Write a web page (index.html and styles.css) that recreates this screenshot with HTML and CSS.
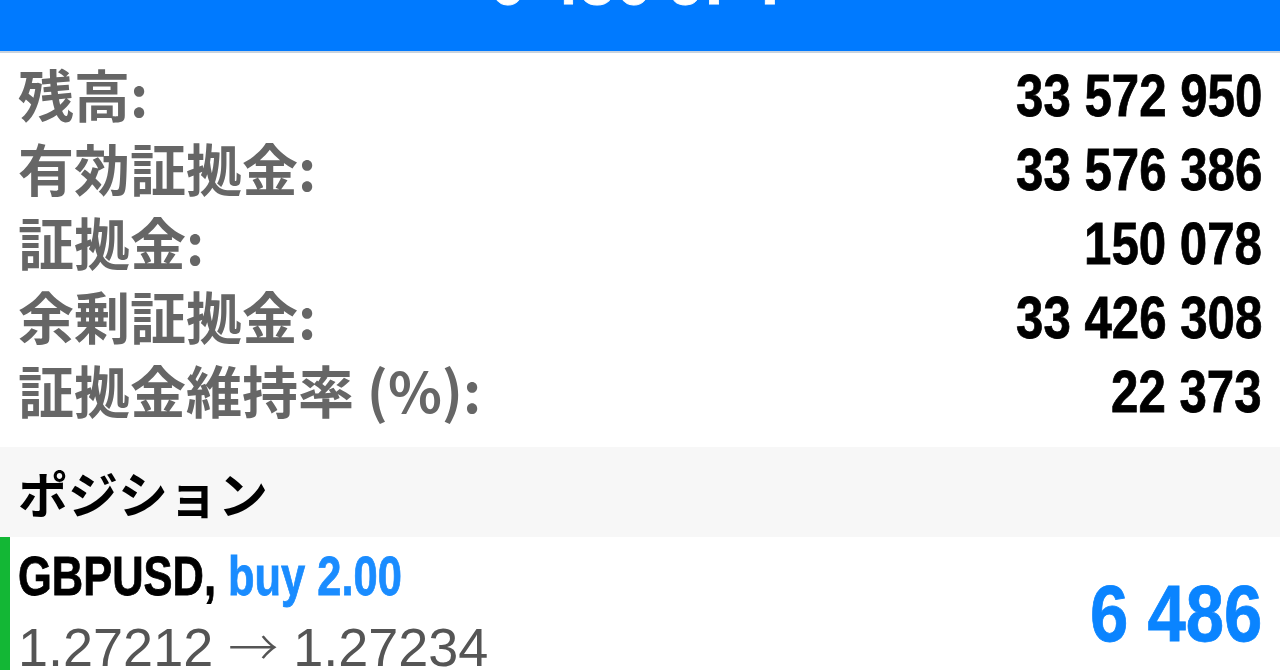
FILE: index.html
```html
<!DOCTYPE html>
<html lang="ja">
<head>
<meta charset="utf-8">
<link rel="stylesheet" href="styles.css">
</head>
<body>
<header class="topbar">
  <div class="topbar-value cond">6 486 JPY</div>
</header>
<section class="summary">
  <div class="row"><span class="label">残高:</span><span class="value cond">33 572 950</span></div>
  <div class="row"><span class="label">有効証拠金:</span><span class="value cond">33 576 386</span></div>
  <div class="row"><span class="label">証拠金:</span><span class="value cond">150 078</span></div>
  <div class="row"><span class="label">余剰証拠金:</span><span class="value cond">33 426 308</span></div>
  <div class="row"><span class="label">証拠金維持率 (%):</span><span class="value cond">22 373</span></div>
</section>
<div class="section-title">ポジション</div>
<div class="position">
  <div class="position-info">
    <div class="symbol cond">GBPUSD, <span class="side">buy 2.00</span></div>
    <div class="prices">1.27212 <span class="arrow">→</span> 1.27234</div>
  </div>
  <div class="profit cond">6 486</div>
</div>
</body>
</html>
```
FILE: styles.css
```css
html, body {
  margin: 0;
  padding: 0;
  background: #ffffff;
}
body {
  width: 1280px;
  height: 670px;
  overflow: hidden;
  font-family: "Liberation Sans", Arial, sans-serif;
}
.cond {
  display: inline-block;
  font-family: "Liberation Sans", Arial, sans-serif;
  font-weight: bold;
  white-space: nowrap;
  -webkit-text-stroke: 0.8px currentColor;
}
.topbar {
  height: 51px;
  background: #007aff;
  border-bottom: 2px solid #c9d3de;
  overflow: hidden;
  display: flex;
  justify-content: center;
  align-items: flex-start;
}
.topbar-value {
  color: #ffffff;
  font-size: 78px;
  line-height: 80px;
  margin-top: -63px;
  transform: scaleX(0.83);
  transform-origin: center;
}
.summary {
  padding: 3px 18px 21px 18px;
  display: flex;
  flex-direction: column;
}
.row {
  height: 74px;
  display: flex;
  justify-content: space-between;
  align-items: center;
}
.label {
  font-family: "Noto Sans CJK JP", "Liberation Sans", sans-serif;
  font-size: 56px;
  font-weight: bold;
  color: #666666;
  line-height: 74px;
}
.value {
  font-size: 60px;
  color: #000000;
  line-height: 74px;
  transform: scaleX(0.82);
  transform-origin: right center;
  position: relative;
  top: 3px;
}
.section-title {
  height: 90px;
  background: #f7f7f7;
  padding: 0 18px;
  display: flex;
  align-items: center;
  font-family: "Noto Sans CJK JP", sans-serif;
  font-size: 50px;
  font-weight: bold;
  color: #000000;
  line-height: 1;
}
.position {
  border-left: 10px solid #13b735;
  padding: 0 18px 0 8px;
  display: flex;
  justify-content: space-between;
  align-items: flex-start;
  height: 150px;
}
.position-info {
  display: flex;
  flex-direction: column;
  padding-top: 4px;
}
.symbol {
  font-size: 55px;
  color: #000000;
  line-height: 70px;
  transform: scaleX(0.79);
  transform-origin: left center;
}
.side {
  color: #1a8cff;
}
.prices {
  font-size: 54px;
  color: #555555;
  line-height: 72px;
  white-space: nowrap;
}
.arrow {
  font-family: "Noto Sans CJK JP", sans-serif;
  font-weight: 300;
  font-size: 50px;
  line-height: 1;
}
.profit {
  font-size: 80px;
  color: #0a84ff;
  line-height: 90px;
  margin-top: 32px;
  transform: scaleX(0.86);
  transform-origin: right center;
}
```
